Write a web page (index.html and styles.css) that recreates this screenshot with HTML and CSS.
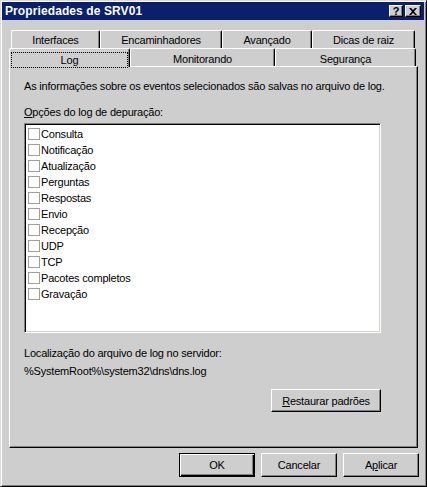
FILE: index.html
```html
<!DOCTYPE html>
<html>
<head>
<meta charset="utf-8">
<link rel="stylesheet" href="styles.css">
</head>
<body>
<div class="window">
  <div class="titlebar">
    <span class="title">Propriedades de SRV01</span>
    <div class="caption-btns">
      <span class="cbtn">?</span>
      <span class="cbtn cbtn-x">
        <svg width="8" height="7" viewBox="0 0 8 7"><path d="M0 0h2l2 2 2-2h2L5 3.5 8 7H6L4 5 2 7H0l3-3.5z" fill="#000"/></svg>
      </span>
    </div>
  </div>
  <div class="tabs">
    <div class="row row1">
      <div class="tab t-if">Interfaces</div>
      <div class="tab t-enc">Encaminhadores</div>
      <div class="tab t-av">Avançado</div>
      <div class="tab t-dr">Dicas de raiz</div>
    </div>
    <div class="row row2">
      <div class="tab t-log sel"><span class="focus">Log</span></div>
      <div class="tab t-mon">Monitorando</div>
      <div class="tab t-seg">Segurança</div>
    </div>
  </div>
  <div class="panel">
    <div class="line">As informações sobre os eventos selecionados são salvas no arquivo de log.</div>
    <div class="line label"><u>O</u>pções do log de depuração:</div>
    <div class="listbox">
      <div class="item"><span class="chk"></span>Consulta</div>
      <div class="item"><span class="chk"></span>Notificação</div>
      <div class="item"><span class="chk"></span>Atualização</div>
      <div class="item"><span class="chk"></span>Perguntas</div>
      <div class="item"><span class="chk"></span>Respostas</div>
      <div class="item"><span class="chk"></span>Envio</div>
      <div class="item"><span class="chk"></span>Recepção</div>
      <div class="item"><span class="chk"></span>UDP</div>
      <div class="item"><span class="chk"></span>TCP</div>
      <div class="item"><span class="chk"></span>Pacotes completos</div>
      <div class="item"><span class="chk"></span>Gravação</div>
    </div>
    <div class="line loc">Localização do arquivo de log no servidor:</div>
    <div class="line path">%SystemRoot%\system32\dns\dns.log</div>
    <div class="restore-row">
      <div class="btn restore"><u>R</u>estaurar padrões</div>
    </div>
  </div>
  <div class="footer">
    <div class="btn default">OK</div>
    <div class="btn">Cancelar</div>
    <div class="btn">A<u>p</u>licar</div>
  </div>
</div>
</body>
</html>
```
FILE: styles.css
```css
html, body {
  margin: 0;
  padding: 0;
  background: #cfcfcf;
}
body {
  font-family: "Liberation Sans", Arial, sans-serif;
  font-size: 11px;
  letter-spacing: -0.2px;
  color: #000;
}
.window {
  width: 427px;
  height: 487px;
  box-sizing: border-box;
  background: #cecece;
  border: 1px solid;
  border-color: #dcdcdc #000 #000 #dcdcdc;
  box-shadow: inset 1px 1px #fff, inset -1px -1px #808080;
  padding: 1px 2px 1px 1px;
  overflow: hidden;
}
.titlebar {
  height: 18px;
  background: #0a1f6e;
  display: flex;
  align-items: center;
  justify-content: space-between;
  padding: 0 3px 0 3px;
}
.title {
  color: #fff;
  font-weight: bold;
  font-size: 12px;
  letter-spacing: 0.1px;
}
.caption-btns {
  display: flex;
  gap: 2px;
}
.cbtn {
  width: 14px;
  height: 12px;
  box-sizing: border-box;
  background: #cecece;
  border: 1px solid;
  border-color: #fff #000 #000 #fff;
  box-shadow: inset -1px -1px #808080;
  display: flex;
  align-items: center;
  justify-content: center;
  font-weight: bold;
  font-size: 11px;
  line-height: 10px;
  letter-spacing: 0;
}
.cbtn-x { width: 16px; }
.tabs {
  margin: 10px 0 0 7px;
  width: 409px;
}
.row {
  display: flex;
}
.row1 {
  height: 18px;
  padding-left: 2px;
}
.row2 {
  height: 18px;
  position: relative;
  z-index: 1;
}
.tab {
  box-sizing: border-box;
  border-top: 1px solid #fff;
  border-left: 1px solid #fff;
  border-right: 1px solid #000;
  box-shadow: inset -1px 0 #808080;
  border-radius: 2px 2px 0 0;
  display: flex;
  justify-content: center;
  padding-top: 3px;
  height: 100%;
}
.t-if { width: 89px; }
.t-enc { width: 122px; }
.t-av { width: 90px; }
.t-dr { width: 103px; }
.t-log { width: 121px; }
.t-mon { width: 145px; }
.t-seg { width: 141px; }
.row2 .tab {
  padding-top: 4px;
}
.sel {
  height: 19px;
  background: #cecece;
  padding: 2px 2px 0 2px;
}
.focus {
  flex: 1;
  text-align: center;
  outline: 1px dotted #000;
  height: 14px;
  line-height: 14px;
}
.panel {
  width: 409px;
  height: 382px;
  margin-left: 7px;
  box-sizing: border-box;
  border: 1px solid;
  border-color: #fff #000 #000 #fff;
  box-shadow: inset -1px -1px #808080;
  padding: 13px 36px 0 14px;
}
.line {
  line-height: 13px;
  height: 13px;
  white-space: nowrap;
}
.label {
  margin-top: 13px;
}
.listbox {
  margin-top: 4px;
  height: 210px;
  box-sizing: border-box;
  background: #fff;
  border: 1px solid;
  border-color: #808080 #fff #fff #808080;
  box-shadow: inset 1px 1px #000, inset -1px -1px #d4d0c8;
  padding: 2px 2px;
}
.item {
  height: 16px;
  display: flex;
  align-items: center;
  gap: 1px;
}
.chk {
  width: 12px;
  height: 12px;
  box-sizing: border-box;
  border: 1px solid #a0a0a0;
  background: #fff;
  flex: none;
  margin-left: 1px;
}
.loc {
  margin-top: 14px;
}
.path {
  margin-top: 5px;
}
.restore-row {
  display: flex;
  justify-content: flex-end;
  margin-top: 11px;
}
.btn {
  box-sizing: border-box;
  height: 23px;
  width: 75px;
  background: #cecece;
  border: 1px solid;
  border-color: #fff #000 #000 #fff;
  box-shadow: inset -1px -1px #808080;
  display: flex;
  align-items: center;
  justify-content: center;
}
.restore {
  width: 110px;
}
.footer {
  display: flex;
  justify-content: flex-end;
  gap: 6px;
  margin-top: 5px;
  padding-right: 5px;
}
.footer .btn {
  height: 24px;
  width: 76px;
}
.default {
  border: 1px solid #000;
  box-shadow: inset 1px 1px #fff, inset -1px -1px #000, inset -2px -2px #808080;
}
```
